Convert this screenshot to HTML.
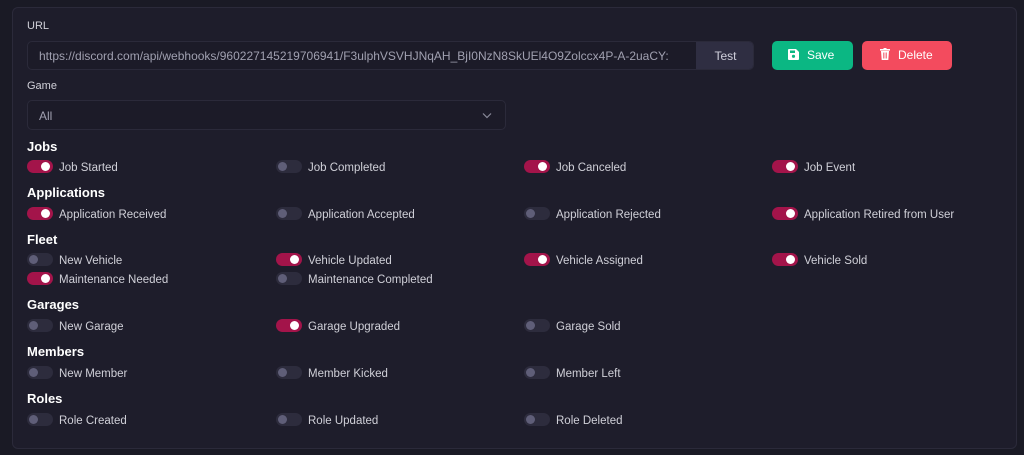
<!DOCTYPE html>
<html><head><style>
*{box-sizing:border-box;margin:0;padding:0}
body{width:1024px;height:455px;background:#1a1a25;font-family:"Liberation Sans",sans-serif;position:relative;overflow:hidden;color:#d8d8e0}
.card{position:absolute;left:12px;top:7px;width:1005px;height:442px;background:#1e1d2b;border:1px solid #2b2a3a;border-radius:6px}
.a{position:absolute}
.lbl{font-size:11px;color:#d0d0d8}
.h{font-size:13px;font-weight:bold;color:#fff}
.t{position:absolute;width:26px;height:13px;border-radius:7px;background:#2d2c3d}
.t::after{content:"";position:absolute;left:2px;top:2px;width:9px;height:9px;border-radius:50%;background:#5f5e78}
.t.on{background:#a3144a}
.t.on::after{left:14px;background:#fff}
.tl{position:absolute;font-size:11.5px;color:#d0d0d8;line-height:13px;margin-top:2px}
</style></head><body>
<div class="card"></div>
<div class="a lbl" style="left:27px;top:20px">URL</div>
<div class="a" style="left:27px;top:41px;width:727px;height:29px;border:1px solid #2b2a3a;border-radius:5px;background:#1c1b28;overflow:hidden">
<div class="a" style="left:11px;top:7px;font-size:12px;color:#a0a0b0;white-space:nowrap;width:645px;overflow:hidden">https://discord.com/api/webhooks/960227145219706941/F3ulphVSVHJNqAH_BjI0NzN8SkUEl4O9Zolccx4P-A-2uaCY:</div>
<div class="a" style="left:668px;top:0;width:59px;height:29px;background:#2f2e42;color:#d0d0dc;font-size:12px;text-align:center;line-height:28px">Test</div>
</div>
<div class="a" style="left:772px;top:41px;width:81px;height:29px;border-radius:5px;background:#0bb783;color:#fff;font-size:12px;line-height:29px;padding-left:16px"><svg width="11" height="11" viewBox="0 0 11 11" style="vertical-align:-1px;margin-right:8px"><path d="M1 0h7l3 3v7a1 1 0 0 1-1 1H1a1 1 0 0 1-1-1V1a1 1 0 0 1 1-1z" fill="#fff"/><rect x="2" y="1.5" width="5" height="2.5" fill="#0bb783"/><circle cx="5.5" cy="7.3" r="1.6" fill="#0bb783"/></svg>Save</div>
<div class="a" style="left:862px;top:41px;width:90px;height:29px;border-radius:5px;background:#f34b5e;color:#fff;font-size:12px;line-height:29px;padding-left:18px"><svg width="10" height="12" viewBox="0 0 10 12" style="vertical-align:-1px;margin-right:8px"><rect x="0" y="1" width="10" height="1.6" fill="#fff"/><rect x="3.5" y="0" width="3" height="1.5" fill="#fff"/><path d="M1 3h8l-.7 9H1.7z" fill="#fff"/><path d="M3.5 4.5v6M5 4.5v6M6.5 4.5v6" stroke="#f34b5e" stroke-width=".7"/></svg>Delete</div>
<div class="a lbl" style="left:27px;top:80px">Game</div>
<div class="a" style="left:27px;top:100px;width:479px;height:30px;border:1px solid #2b2a3a;border-radius:5px;background:#1c1b28">
<div class="a" style="left:11px;top:8px;font-size:12px;color:#a0a0b0">All</div>
<svg class="a" style="left:454px;top:11px" width="10" height="7" viewBox="0 0 10 7"><path d="M1 1.5l4 4 4-4" stroke="#8a8a9a" stroke-width="1.2" fill="none"/></svg>
</div>

<div class="a h" style="left:27px;top:139px">Jobs</div>
<div class="t on" style="left:27px;top:160px"></div><div class="tl" style="left:59px;top:160px">Job Started</div>
<div class="t" style="left:276px;top:160px"></div><div class="tl" style="left:308px;top:160px">Job Completed</div>
<div class="t on" style="left:524px;top:160px"></div><div class="tl" style="left:556px;top:160px">Job Canceled</div>
<div class="t on" style="left:772px;top:160px"></div><div class="tl" style="left:804px;top:160px">Job Event</div>

<div class="a h" style="left:27px;top:185px">Applications</div>
<div class="t on" style="left:27px;top:207px"></div><div class="tl" style="left:59px;top:207px">Application Received</div>
<div class="t" style="left:276px;top:207px"></div><div class="tl" style="left:308px;top:207px">Application Accepted</div>
<div class="t" style="left:524px;top:207px"></div><div class="tl" style="left:556px;top:207px">Application Rejected</div>
<div class="t on" style="left:772px;top:207px"></div><div class="tl" style="left:804px;top:207px">Application Retired from User</div>

<div class="a h" style="left:27px;top:232px">Fleet</div>
<div class="t" style="left:27px;top:253px"></div><div class="tl" style="left:59px;top:253px">New Vehicle</div>
<div class="t on" style="left:276px;top:253px"></div><div class="tl" style="left:308px;top:253px">Vehicle Updated</div>
<div class="t on" style="left:524px;top:253px"></div><div class="tl" style="left:556px;top:253px">Vehicle Assigned</div>
<div class="t on" style="left:772px;top:253px"></div><div class="tl" style="left:804px;top:253px">Vehicle Sold</div>
<div class="t on" style="left:27px;top:272px"></div><div class="tl" style="left:59px;top:272px">Maintenance Needed</div>
<div class="t" style="left:276px;top:272px"></div><div class="tl" style="left:308px;top:272px">Maintenance Completed</div>

<div class="a h" style="left:27px;top:297px">Garages</div>
<div class="t" style="left:27px;top:319px"></div><div class="tl" style="left:59px;top:319px">New Garage</div>
<div class="t on" style="left:276px;top:319px"></div><div class="tl" style="left:308px;top:319px">Garage Upgraded</div>
<div class="t" style="left:524px;top:319px"></div><div class="tl" style="left:556px;top:319px">Garage Sold</div>

<div class="a h" style="left:27px;top:344px">Members</div>
<div class="t" style="left:27px;top:366px"></div><div class="tl" style="left:59px;top:366px">New Member</div>
<div class="t" style="left:276px;top:366px"></div><div class="tl" style="left:308px;top:366px">Member Kicked</div>
<div class="t" style="left:524px;top:366px"></div><div class="tl" style="left:556px;top:366px">Member Left</div>

<div class="a h" style="left:27px;top:391px">Roles</div>
<div class="t" style="left:27px;top:413px"></div><div class="tl" style="left:59px;top:413px">Role Created</div>
<div class="t" style="left:276px;top:413px"></div><div class="tl" style="left:308px;top:413px">Role Updated</div>
<div class="t" style="left:524px;top:413px"></div><div class="tl" style="left:556px;top:413px">Role Deleted</div>
</body></html>
